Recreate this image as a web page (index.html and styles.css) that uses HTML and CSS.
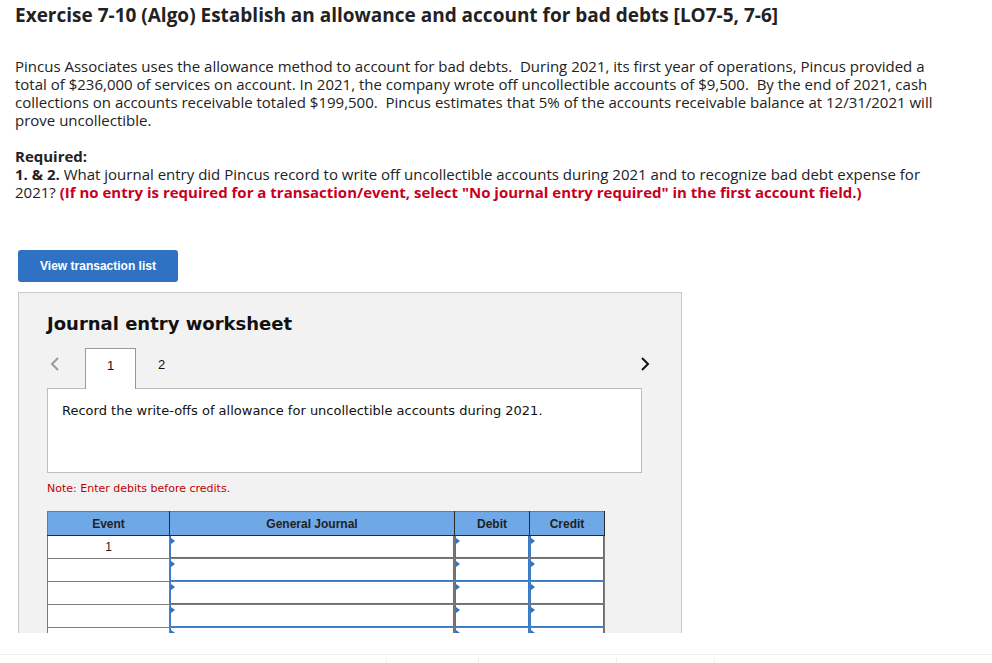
FILE: index.html
```html
<!DOCTYPE html>
<html>
<head>
<meta charset="utf-8">
<link rel="stylesheet" href="styles.css">
</head>
<body>
<div class="page">
  <h1 class="title">Exercise 7-10 (Algo) Establish an allowance and account for bad debts [LO7-5, 7-6]</h1>
  <p class="intro">Pincus Associates uses the allowance method to account for bad debts.&nbsp; During 2021, its first year of operations, Pincus provided a total of $236,000 of services on account. In 2021, the company wrote off uncollectible accounts of $9,500.&nbsp; By the end of 2021, cash collections on accounts receivable totaled $199,500.&nbsp; Pincus estimates that 5% of the accounts receivable balance at 12/31/2021 will prove uncollectible.</p>
  <div class="required">
    <div class="req-label">Required:</div>
    <p class="req-text"><b>1. &amp; 2.</b> What journal entry did Pincus record to write off uncollectible accounts during 2021 and to recognize bad debt expense for 2021? <span class="red">(If no entry is required for a transaction/event, select "No journal entry required" in the first account field.)</span></p>
  </div>
  <button class="btn">View transaction list</button>
  <div class="viewport">
    <div class="panel">
      <h2 class="ws-title">Journal entry worksheet</h2>
      <div class="tabs">
        <span class="chev chev-left"><svg width="12" height="16" viewBox="0 0 12 16"><path d="M9 2 L3 8 L9 14" fill="none" stroke="#9a9a9a" stroke-width="2"/></svg></span>
        <span class="tab active">1</span>
        <span class="tab">2</span>
        <span class="spacer"></span>
        <span class="chev chev-right"><svg width="12" height="16" viewBox="0 0 12 16"><path d="M3 2 L9 8 L3 14" fill="none" stroke="#111" stroke-width="2"/></svg></span>
      </div>
      <div class="desc">Record the write-offs of allowance for uncollectible accounts during 2021.</div>
      <div class="note">Note: Enter debits before credits.</div>
      <table class="journal">
        <thead>
          <tr><th class="c-event">Event</th><th class="c-gj">General Journal</th><th class="c-dr">Debit</th><th class="c-cr">Credit</th></tr>
        </thead>
        <tbody>
          <tr><td class="ev">1</td><td class="in"><div class="box"></div></td><td class="in"><div class="box"></div></td><td class="in"><div class="box"></div></td></tr>
          <tr><td class="ev"></td><td class="in"><div class="box"></div></td><td class="in"><div class="box"></div></td><td class="in"><div class="box"></div></td></tr>
          <tr><td class="ev"></td><td class="in"><div class="box"></div></td><td class="in"><div class="box"></div></td><td class="in"><div class="box"></div></td></tr>
          <tr><td class="ev"></td><td class="in"><div class="box"></div></td><td class="in"><div class="box"></div></td><td class="in"><div class="box"></div></td></tr>
          <tr><td class="ev"></td><td class="in"><div class="box"></div></td><td class="in"><div class="box"></div></td><td class="in"><div class="box"></div></td></tr>
        </tbody>
      </table>
    </div>
  </div>
</div>
<div class="footer">
  <span class="f-seg f1"></span><span class="f-seg f2"></span><span class="f-seg f3"></span><span class="f-seg f4"></span>
</div>
</body>
</html>
```

FILE: styles.css
```css
html, body {
  margin: 0;
  padding: 0;
  background: #fff;
}
body {
  font-family: "Open Sans", "Lato", sans-serif;
  color: #222;
}
.page {
  padding: 0 0 0 15px;
  height: 654px;
  box-sizing: border-box;
  overflow: hidden;
}
.title {
  margin: 0;
  padding-top: 3px;
  font-size: 19px;
  line-height: 24px;
  font-weight: 700;
  color: #222;
}
.intro {
  margin: 30px 0 0 0;
  width: 935px;
  font-size: 15px;
  line-height: 18px;
}
.required {
  margin-top: 18px;
  width: 935px;
  font-size: 15px;
  line-height: 18px;
}
.req-label {
  font-weight: 700;
}
.req-text {
  margin: 0;
}
.red {
  color: #c8001e;
  font-weight: 700;
}
.btn {
  display: block;
  margin: 49px 0 0 3px;
  width: 160px;
  height: 32px;
  background: #2f72c4;
  border: none;
  border-radius: 3px;
  color: #fff;
  font-family: "Liberation Sans", Arial, sans-serif;
  font-weight: 700;
  font-size: 12px;
  padding: 0;
}
.viewport {
  margin: 10px 0 0 3px;
  height: 341px;
  overflow: hidden;
}
.panel {
  width: 664px;
  box-sizing: border-box;
  background: #f2f2f2;
  border: 1px solid #c8c8c8;
  padding: 19px 0 20px 28px;
  height: 500px;
  font-family: "DejaVu Sans", Verdana, sans-serif;
}
.ws-title {
  margin: 0;
  font-size: 18px;
  line-height: 24px;
  font-weight: 700;
  color: #111;
}
.tabs {
  display: flex;
  align-items: stretch;
  margin-top: 12px;
  width: 608px;
  height: 41px;
  position: relative;
  z-index: 1;
}
.chev {
  display: flex;
  align-items: center;
  justify-content: center;
  height: 32px;
}
.chev-left {
  width: 20px;
  margin-right: 16px;
  justify-content: flex-start;
  padding-left: 2px;
}
.tab {
  width: 51px;
  box-sizing: border-box;
  display: flex;
  align-items: center;
  justify-content: center;
  color: #111;
  padding-bottom: 8px;
  font-family: "Liberation Sans", Arial, sans-serif;
  font-size: 13px;
}
.tab.active {
  background: #fff;
  border: 1px solid #9a9a9a;
  border-bottom: none;
}
.spacer {
  flex: 1;
}
.chev-right {
  width: 20px;
}
.desc {
  width: 595px;
  height: 85px;
  box-sizing: border-box;
  margin-top: -1px;
  background: #fff;
  border: 1px solid #bdbdbd;
  padding: 14px 14px;
  font-size: 13px;
  color: #111;
}
.note {
  margin-top: 9px;
  font-size: 11px;
  color: #c00000;
}
.journal {
  margin-top: 16px;
  border-collapse: collapse;
  font-family: "Liberation Sans", Arial, sans-serif;
  font-size: 12px;
}
.journal th {
  background: #6ea8e6;
  height: 23px;
  padding: 0;
  font-weight: 700;
  color: #222;
  border: 1px solid #2a2a2a;
  border-top-color: #777;
  border-left-color: #777;
  border-right-color: #2a2a2a;
}
.journal th.c-event { width: 121px; border-left-color: #777; }
.journal th.c-gj { width: 284px; }
.journal th.c-dr { width: 74px; }
.journal th.c-cr { width: 74px; }
.journal td {
  height: 22px;
  padding: 0;
  border: 1px solid #7a7a7a;
  background: #fff;
}
.journal td.ev {
  text-align: center;
  color: #222;
}
.journal td.in {
  vertical-align: top;
  background: #fff;
}
.box {
  height: 22px;
  box-sizing: border-box;
  border: 1px solid #3b78c2;
  border-top: none;
  position: relative;
}
.box::before {
  content: "";
  position: absolute;
  left: 0;
  top: 2px;
  border-top: 3px solid transparent;
  border-bottom: 3px solid transparent;
  border-left: 4px solid #2f72c4;
}
.footer {
  display: flex;
  border-top: 1px solid #ececec;
  height: 8px;
}
.f-seg {
  border-left: 1px solid #f0f0f0;
  height: 8px;
  margin-top: 2px;
}
.f1 { margin-left: 386px; }
.f2 { margin-left: 91px; }
.f3 { margin-left: 137px; }
.f4 { margin-left: 97px; }
```
